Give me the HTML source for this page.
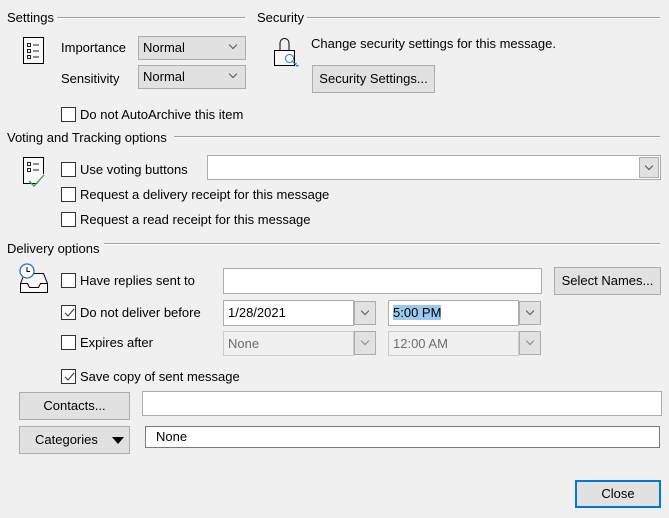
<!DOCTYPE html>
<html><head><meta charset="utf-8"><style>
*{box-sizing:border-box;margin:0;padding:0}
body{width:669px;height:518px;background:#f0f0f0;font-family:"Liberation Sans",sans-serif;font-size:13px;color:#000;position:relative;overflow:hidden}
.a{position:absolute}
.t{position:absolute;line-height:16px;white-space:nowrap}
.line{position:absolute;height:1px;background:#a0a0a0;border-bottom:1px solid #fff;height:2px}
.cb{position:absolute;width:15px;height:15px;border:1px solid #333;background:#fff}
.cb svg{position:absolute;left:1px;top:1px}
.sel{position:absolute;background:#e1e1e1;border:1px solid #adadad;padding-left:4px;line-height:21px}
.btn{position:absolute;background:#e1e1e1;border:1px solid #adadad;text-align:center;line-height:25px}
.tb{position:absolute;background:#fff;border:1px solid #adadad;padding-left:4px}
.arr{position:absolute;background:#e1e1e1;border:1px solid #adadad}
.chev{position:absolute;width:6px;height:6px;border-right:1px solid #555;border-bottom:1px solid #555;transform:rotate(45deg)}
</style></head><body>
<div class="t" style="left:7px;top:10px">Settings</div>
<div class="line" style="left:57px;top:17px;width:188px"></div>
<div class="t" style="left:257px;top:10px">Security</div>
<div class="line" style="left:307px;top:17px;width:353px"></div>

<svg class="a" style="left:22px;top:36px" width="24" height="30"><rect x="1.5" y="1.5" width="20" height="26" fill="#f8f8f8" stroke="#000"/><rect x="5.5" y="7.5" width="3" height="3" fill="none" stroke="#222"/><rect x="5.5" y="13.5" width="3" height="3" fill="none" stroke="#222"/><rect x="5.5" y="19.5" width="3" height="3" fill="none" stroke="#222"/><path d="M11 9h6M11 15h6M11 21h6" stroke="#222"/></svg>
<div class="t" style="left:61px;top:40px">Importance</div>
<div class="t" style="left:61px;top:71px">Sensitivity</div>
<div class="sel" style="left:138px;top:36px;width:108px;height:24px">Normal<div class="chev" style="left:91px;top:5px"></div></div>
<div class="sel" style="left:138px;top:65px;width:108px;height:24px">Normal<div class="chev" style="left:91px;top:5px"></div></div>

<svg class="a" style="left:273px;top:36px" width="30" height="32"><path d="M7 14V7a4.5 4.5 0 0 1 9 0v7" fill="none" stroke="#000"/><rect x="1.5" y="14.5" width="20" height="15" fill="#f8f8f8" stroke="#000"/><circle cx="16.5" cy="22.5" r="4" fill="#fff" stroke="#2b6cc4"/><path d="M19.5 25.5l5 5M22 28.5l1.5-1.5M24 30.5l1.5-1.5" stroke="#2b6cc4" fill="none"/></svg>
<div class="t" style="left:311px;top:36px">Change security settings for this message.</div>
<div class="btn" style="left:312px;top:65px;width:123px;height:28px">Security Settings...</div>

<div class="cb" style="left:61px;top:107px"></div>
<div class="t" style="left:80px;top:107px">Do not AutoArchive this item</div>

<div class="t" style="left:7px;top:130px">Voting and Tracking options</div>
<div class="line" style="left:174px;top:136px;width:486px"></div>
<svg class="a" style="left:22px;top:156px" width="30" height="32"><path d="M21.5 18V1.5h-20v26h14" fill="#f8f8f8" stroke="#000"/><rect x="5.5" y="6.5" width="3" height="3" fill="none" stroke="#222"/><rect x="5.5" y="12.5" width="3" height="3" fill="none" stroke="#222"/><path d="M11 8h6M11 14h6" stroke="#222"/><path d="M7 25l5 5 10-11" stroke="#3c9a4a" fill="none" stroke-width="1.3"/></svg>
<div class="cb" style="left:61px;top:162px"></div>
<div class="t" style="left:80px;top:162px">Use voting buttons</div>
<div class="tb" style="left:207px;top:155px;width:454px;height:25px"><div class="arr" style="right:1px;top:1px;width:20px;height:21px"><div class="chev" style="left:6px;top:5px"></div></div></div>
<div class="cb" style="left:61px;top:187px"></div>
<div class="t" style="left:80px;top:187px">Request a delivery receipt for this message</div>
<div class="cb" style="left:61px;top:212px"></div>
<div class="t" style="left:80px;top:212px">Request a read receipt for this message</div>

<div class="t" style="left:7px;top:241px">Delivery options</div>
<div class="line" style="left:104px;top:243px;width:556px"></div>
<svg class="a" style="left:17px;top:263px" width="34" height="32"><path d="M3.5 20.5l4-10h19l4 10v9h-27z" fill="#f8f8f8" stroke="#000"/><path d="M3.5 20.5h7l2 4h9l2-4h7" fill="none" stroke="#000"/><circle cx="10" cy="8" r="7" fill="#fff" stroke="#2b6cc4" stroke-width="1.3"/><path d="M10 4v4.5h3" stroke="#000" fill="none"/></svg>
<div class="cb" style="left:61px;top:273px"></div>
<div class="t" style="left:80px;top:273px">Have replies sent to</div>
<div class="tb" style="left:223px;top:268px;width:319px;height:26px"></div>
<div class="btn" style="left:554px;top:267px;width:107px;height:28px">Select Names...</div>

<div class="cb" style="left:61px;top:305px"><svg width="12" height="12"><path d="M2 6l3 3 6-7" stroke="#333" fill="none"/></svg></div>
<div class="t" style="left:80px;top:305px">Do not deliver before</div>
<div class="tb" style="left:223px;top:300px;width:131px;height:26px;line-height:24px">1/28/2021</div>
<div class="arr" style="left:354px;top:301px;width:22px;height:24px"><div class="chev" style="left:7px;top:6px"></div></div>
<div class="tb" style="left:388px;top:300px;width:131px;height:26px;line-height:24px"><span style="background:#99c9ef">5:00 PM</span></div>
<div class="arr" style="left:519px;top:301px;width:22px;height:24px"><div class="chev" style="left:7px;top:6px"></div></div>

<div class="cb" style="left:61px;top:335px"></div>
<div class="t" style="left:80px;top:335px">Expires after</div>
<div class="tb" style="left:223px;top:331px;width:131px;height:25px;line-height:23px;background:#f0f0f0;border-color:#ccc;color:#6d6d6d">None</div>
<div class="arr" style="left:354px;top:331px;width:22px;height:24px"><div class="chev" style="left:7px;top:6px;border-color:#888"></div></div>
<div class="tb" style="left:388px;top:331px;width:131px;height:25px;line-height:23px;background:#f0f0f0;border-color:#ccc;color:#6d6d6d">12:00 AM</div>
<div class="arr" style="left:519px;top:331px;width:22px;height:24px"><div class="chev" style="left:7px;top:6px;border-color:#888"></div></div>

<div class="cb" style="left:61px;top:369px"><svg width="12" height="12"><path d="M2 6l3 3 6-7" stroke="#333" fill="none"/></svg></div>
<div class="t" style="left:80px;top:369px">Save copy of sent message</div>

<div class="btn" style="left:19px;top:392px;width:111px;height:28px">Contacts...</div>
<div class="tb" style="left:142px;top:391px;width:520px;height:25px"></div>
<div class="btn" style="left:19px;top:426px;width:111px;height:28px;text-align:left;padding-left:15px">Categories<svg class="a" style="left:92px;top:10px" width="12" height="8"><path d="M0 0h12L6 7z" fill="#000"/></svg></div>
<div class="tb" style="left:145px;top:426px;width:515px;height:22px;border-color:#7a7a7a;padding-left:10px;line-height:20px">None</div>

<div class="btn" style="left:575px;top:480px;width:86px;height:28px;border:2px solid #0078d7;line-height:24px">Close</div>
</body></html>
